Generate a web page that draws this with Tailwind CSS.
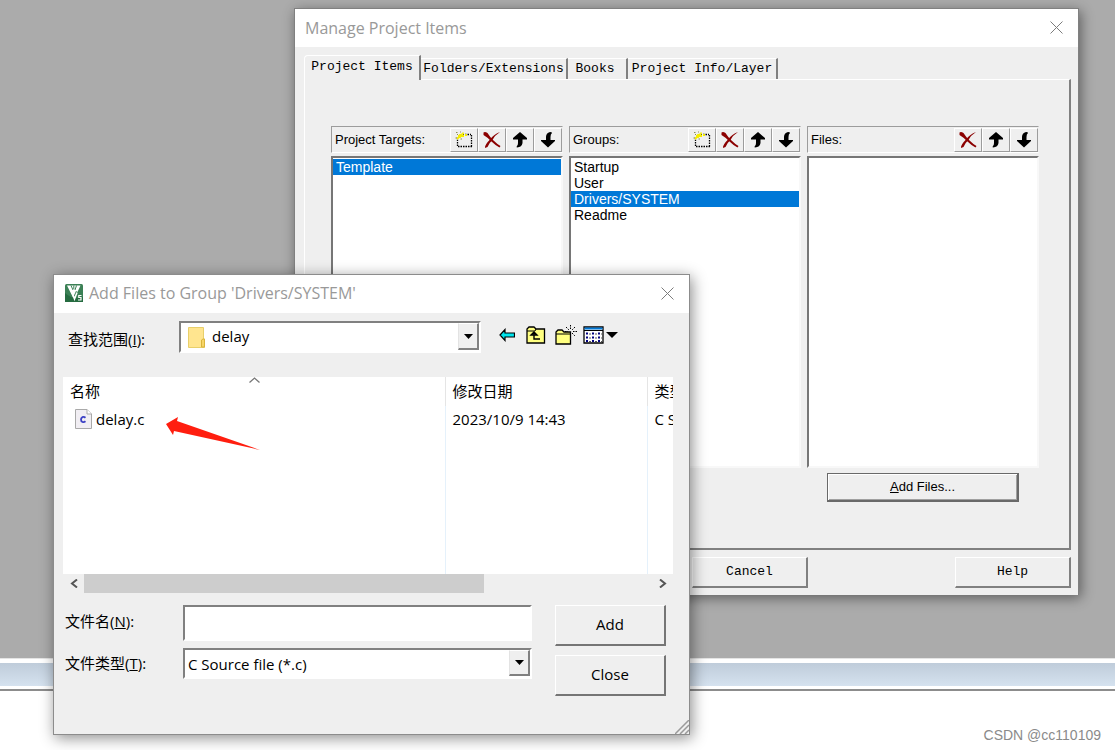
<!DOCTYPE html>
<html lang="zh-CN">
  <head>
    <meta charset="UTF-8" />
    <meta name="viewport" content="width=device-width, initial-scale=1.0" />
    <title>Manage Project Items</title>
    <script src="https://cdn.jsdelivr.net/npm/@tailwindcss/browser@4"></script>
  </head>

  <body class="font-['Open_Sans','Noto_Sans_CJK_SC',sans-serif] text-black">
    <!-- Shared icons -->
    <svg class="hidden">
      <symbol id="close" viewBox="0 0 13 13">
        <path d="M0.5 0.5L12.5 12.5M12.5 0.5L0.5 12.5" stroke="#7c7c7c" fill="none" />
      </symbol>
      <symbol id="new" viewBox="0 0 18 18">
        <path d="M5 3.500H16M2.500 6V16M3 15.500H17M16.500 4V16" stroke="#000" stroke-width="1.300" stroke-dasharray="1.500 1" fill="none" />
        <path d="M5 1v8M1 5h9M2 2l6 6M8 2L2 8" stroke="#efefef" stroke-width="2" />
        <path d="M5 3v4M3 5h6M7 3L2 8M8 1.500v2M10 4h2" stroke="#f5ec00" stroke-width="1.800" />
        <path d="M1 1.500h1.500M2 3.500h1M0.500 7h1.500M5 1h1M5.500 8h1.500" stroke="#8c8c50" />
      </symbol>
      <symbol id="delete" viewBox="0 0 18 18">
        <path d="M0.500 1.500Q2 0.500 4.500 2Q7 6 10 9Q14 13 17.500 15L16.500 16.500Q12 14 8.500 10.500Q4 6 0.500 4Z" fill="#8b0000" />
        <path d="M17 1Q12 4 9.500 9Q6 12 4.500 16L2 17Q1.500 14 7 8.500Q11 3 17 1Z" fill="#8b0000" />
      </symbol>
      <symbol id="up" viewBox="0 0 16 16">
        <path d="M8 0L15 6V7.500H10.500V11Q10 15 5 15.500Q4 15 5 14Q6 13 6 11V7.500H1V6Z" fill="#000" />
      </symbol>
      <symbol id="down" viewBox="0 0 16 16">
        <path d="M8 15.500L15 9V8H10.500V5Q10.500 2 12 1Q12 0 10 0Q6 1 6 5V8H1V9Z" fill="#000" />
      </symbol>
    </svg>

    <div class="relative flex h-screen min-h-[750px] flex-col overflow-hidden">
      <!-- IDE background -->
      <div class="flex-1 bg-[#ababab]"></div>
      <div class="h-[5px] border-t border-[#e4e4e4] bg-white"></div>
      <div class="h-[23px] bg-linear-to-b from-[#bfccda] to-[#d5e2ef]"></div>
      <div class="h-[5px] border-b-2 border-[#8c8c8c] bg-white"></div>
      <div class="flex h-[59px] items-end justify-end bg-white px-[14px] pb-[5px]">
        <p class="font-['Liberation_Sans',sans-serif] text-[14px] leading-5 text-[#8a8a8a]">CSDN @cc110109</p>
      </div>

      <!-- Manage Project Items -->
      <section class="absolute top-2 left-[294px] w-[785px] border border-b-0 border-[#808080] bg-[#efefef] shadow-[2px_3px_12px_rgba(0,0,0,0.45)]">
        <header class="flex h-[38px] items-center justify-between bg-white pr-[15px] pb-px pl-[10px]">
          <h2 class="text-[16px] text-[#999999]">Manage Project Items</h2>
          <button aria-label="Close window"><svg class="size-[13px]"><use href="#close" /></svg></button>
        </header>

        <div class="pt-2 pr-[7px] pb-[7px] pl-[9px]">
          <nav class="flex h-6 items-end font-['Liberation_Mono',monospace] text-[13px] leading-5">
            <button class="z-10 -mb-px h-[25px] w-[117px] rounded-tl-sm border-t border-r-2 border-l border-t-white border-r-[#808080] border-l-white bg-[#efefef] pb-[3px] text-center">Project Items</button>
            <button class="h-[21px] w-[147px] border-t border-r-2 border-t-white border-r-[#808080] text-center">Folders/Extensions</button>
            <button class="h-[21px] w-[60px] border-t border-r-2 border-t-white border-r-[#808080] pr-1 text-center">Books</button>
            <button class="h-[21px] w-[150px] border-t border-r-2 border-t-white border-r-[#808080] text-center">Project Info/Layer</button>
          </nav>

          <div class="border-t border-r-2 border-b-2 border-l border-t-white border-r-[#808080] border-b-[#808080] border-l-white pt-[46px] pr-[30px] pb-[46px] pl-[26px] font-['Liberation_Sans',sans-serif] text-[14px] leading-4">
            <div class="grid grid-cols-3 gap-[6px]">
              <div>
                <div class="flex h-[27px] items-stretch justify-between border border-t-[#9c9c9c] border-r-transparent border-b-white border-l-[#9c9c9c] pt-px pl-[3px]">
                  <span class="self-center text-[13px]">Project Targets:</span>
                  <div class="flex">
                    <button aria-label="New target" class="flex w-7 items-center justify-center border border-t-white border-r-[#9c9c9c] border-b-[#9c9c9c] border-l-white"><svg class="size-[18px]"><use href="#new" /></svg></button>
                    <button aria-label="Delete target" class="flex w-7 items-center justify-center border border-t-white border-r-[#9c9c9c] border-b-[#9c9c9c] border-l-white"><svg class="size-[18px]"><use href="#delete" /></svg></button>
                    <button aria-label="Move target up" class="flex w-7 items-center justify-center border border-t-white border-r-[#9c9c9c] border-b-[#9c9c9c] border-l-white"><svg class="size-4"><use href="#up" /></svg></button>
                    <button aria-label="Move target down" class="flex w-7 items-center justify-center border border-t-white border-r-[#9c9c9c] border-b-[#9c9c9c] border-l-white"><svg class="size-4"><use href="#down" /></svg></button>
                  </div>
                </div>
                <ul class="mt-[3px] h-[312px] border-2 border-t-[#767676] border-r-[#f8f8f8] border-b-[#f8f8f8] border-l-[#767676] bg-white pt-px">
                  <li class="bg-[#0078d7] px-[3px] text-white">Template</li>
                </ul>
              </div>

              <div>
                <div class="flex h-[27px] items-stretch justify-between border border-t-[#9c9c9c] border-r-transparent border-b-white border-l-[#9c9c9c] pt-px pl-[3px]">
                  <span class="self-center text-[13px]">Groups:</span>
                  <div class="flex">
                    <button aria-label="New group" class="flex w-7 items-center justify-center border border-t-white border-r-[#9c9c9c] border-b-[#9c9c9c] border-l-white"><svg class="size-[18px]"><use href="#new" /></svg></button>
                    <button aria-label="Delete group" class="flex w-7 items-center justify-center border border-t-white border-r-[#9c9c9c] border-b-[#9c9c9c] border-l-white"><svg class="size-[18px]"><use href="#delete" /></svg></button>
                    <button aria-label="Move group up" class="flex w-7 items-center justify-center border border-t-white border-r-[#9c9c9c] border-b-[#9c9c9c] border-l-white"><svg class="size-4"><use href="#up" /></svg></button>
                    <button aria-label="Move group down" class="flex w-7 items-center justify-center border border-t-white border-r-[#9c9c9c] border-b-[#9c9c9c] border-l-white"><svg class="size-4"><use href="#down" /></svg></button>
                  </div>
                </div>
                <ul class="mt-[3px] h-[312px] border-2 border-t-[#767676] border-r-[#f8f8f8] border-b-[#f8f8f8] border-l-[#767676] bg-white pt-px">
                  <li class="px-[3px]">Startup</li>
                  <li class="px-[3px]">User</li>
                  <li class="bg-[#0078d7] px-[3px] text-white">Drivers/SYSTEM</li>
                  <li class="px-[3px]">Readme</li>
                </ul>
              </div>

              <div>
                <div class="flex h-[27px] items-stretch justify-between border border-t-[#9c9c9c] border-r-transparent border-b-white border-l-[#9c9c9c] pt-px pl-[3px]">
                  <span class="self-center text-[13px]">Files:</span>
                  <div class="flex">
                    <button aria-label="Delete file" class="flex w-7 items-center justify-center border border-t-white border-r-[#9c9c9c] border-b-[#9c9c9c] border-l-white"><svg class="size-[18px]"><use href="#delete" /></svg></button>
                    <button aria-label="Move file up" class="flex w-7 items-center justify-center border border-t-white border-r-[#9c9c9c] border-b-[#9c9c9c] border-l-white"><svg class="size-4"><use href="#up" /></svg></button>
                    <button aria-label="Move file down" class="flex w-7 items-center justify-center border border-t-white border-r-[#9c9c9c] border-b-[#9c9c9c] border-l-white"><svg class="size-4"><use href="#down" /></svg></button>
                  </div>
                </div>
                <ul class="mt-[3px] h-[312px] border-2 border-t-[#767676] border-r-[#f8f8f8] border-b-[#f8f8f8] border-l-[#767676] bg-white"></ul>
                <button class="mx-auto mt-[5px] block h-[29px] w-48 border border-r-2 border-b-2 border-[#696969] text-[13px] shadow-[inset_1px_1px_0_#fff,inset_-1px_-1px_0_#a0a0a0]"><u>A</u>dd Files...</button>
              </div>
            </div>
          </div>

          <div class="mt-[7px] flex justify-end gap-[147px] font-['Liberation_Mono',monospace] text-[13px]">
            <button class="h-[31px] w-[116px] border border-r-2 border-b-2 border-t-white border-r-[#808080] border-b-[#808080] border-l-white">Cancel</button>
            <button class="h-[31px] w-[116px] border border-r-2 border-b-2 border-t-white border-r-[#808080] border-b-[#808080] border-l-white">Help</button>
          </div>
        </div>
      </section>

      <!-- Add Files dialog -->
      <section class="absolute top-[274px] left-[53px] w-[637px] border border-[#8c8c8c] bg-[#efefef] text-[15px] leading-5 shadow-[2px_3px_14px_rgba(0,0,0,0.45)]">
        <header class="flex h-[38px] items-center bg-white pr-[15px] pb-[2px] pl-[11px]">
          <svg class="size-[18px]" viewBox="0 0 18 18">
            <rect width="18" height="18" rx="1.500" fill="#3b8055" />
            <path d="M0 9V18H18V13Q9 17 0 9Z" fill="#256b40" />
            <path d="M2 1.500H15.500L12.500 8L11 7L8 13.500Z" fill="#fff" />
            <path d="M6 1.500L8 6M11.500 1.500L10 6M8.800 1.500V5" stroke="#3b8055" />
            <path d="M7 8L9.500 15L12 8.500" stroke="#fff" stroke-width="1.600" fill="none" />
            <path d="M16.500 11.500H13.800V13.500H16V16H13" stroke="#fff" stroke-width="1.200" fill="none" />
          </svg>
          <h2 class="ml-[6px] flex-1 text-[16px] text-[#999999]">Add Files to Group 'Drivers/SYSTEM'</h2>
          <button aria-label="Close dialog"><svg class="size-[13px]"><use href="#close" /></svg></button>
        </header>

        <div class="px-[9px] pt-2">
          <div class="flex h-8 items-center pl-[5px]">
            <label for="lookin" class="w-[111px] pt-1">查找范围(<u>I</u>):</label>
            <div class="relative w-[302px]">
              <select id="lookin" class="block h-8 w-full appearance-none border-2 border-t-[#808080] border-r-white border-b-white border-l-[#808080] bg-white pb-[2px] pl-[31px]">
                <option>delay</option>
              </select>
              <svg class="pointer-events-none absolute top-[6px] left-[9px] h-[21px] w-[17px]" viewBox="0 0 17 21">
                <path d="M0.500 0.500H15.500V12H16.500V20.500H0.500Z" fill="#ffe58f" stroke="#e8cf6a" />
                <path d="M13.500 20V13L15 12H16.500V20Z" fill="#f7d566" stroke="#d9b43c" />
              </svg>
              <span class="pointer-events-none absolute top-[2px] right-[2px] flex h-[27px] w-[21px] items-center justify-center border border-r-2 border-b-2 border-t-white border-r-[#808080] border-b-[#808080] border-l-[#e3e3e3] bg-[#efefef]">
                <svg class="h-[5px] w-[9px]" viewBox="0 0 9 5"><path d="M0 0H9L4.500 5Z" /></svg>
              </span>
            </div>
            <div class="flex items-center pb-[5px] pl-[18px]">
              <button aria-label="Back">
                <svg class="h-[14px] w-4" viewBox="0 0 16 14"><path d="M1 7L6 1.500V5H15.500V9H6V12.500Z" fill="#00e5ee" stroke="#000" stroke-width="1.200" /></svg>
              </button>
              <button aria-label="Up one level" class="ml-[11px]">
                <svg class="h-[18px] w-5" viewBox="0 0 20 18">
                  <path d="M1 17V3L3 1H8L10 3H18.500V17Z" fill="#ffff80" stroke="#000" stroke-width="1.300" />
                  <path d="M1 5H9L10 3" stroke="#000" fill="none" />
                  <path d="M8 6V13H14M5 9L8 6L11 9Z" stroke="#000" stroke-width="1.400" fill="none" />
                </svg>
              </button>
              <button aria-label="New folder" class="ml-[9px]">
                <svg class="h-5 w-[22px]" viewBox="0 0 22 20">
                  <path d="M1 19V7L3 5H7L9 7H15.500V19Z" fill="#ffff80" stroke="#000" stroke-width="1.300" />
                  <path d="M1 9H15" stroke="#000" />
                  <path d="M15.500 0V4M15.500 9V13M10 6.500H13M18 6.500H22M11 2L14 5M17 8L20 11M20 2L17 5" stroke="#000" stroke-dasharray="1.500 1" />
                </svg>
              </button>
              <button aria-label="View menu" class="ml-[6px] flex items-center gap-[2px]">
                <svg class="h-[18px] w-[21px]" viewBox="0 0 21 18">
                  <path d="M1 1H20V17H1Z" fill="#fff" stroke="#000" stroke-width="1.300" />
                  <path d="M1.500 2.500H19.500" stroke="#0078d7" stroke-width="2" />
                  <path d="M1 4.500H20" stroke="#000" />
                  <path d="M3 7.500H5M9 7.500H11M15 7.500H17M3 11.500H5M9 11.500H11M15 11.500H17M3 15H5M9 15H11M15 15H17" stroke="#000080" stroke-width="2" />
                  <path d="M6 8H8M12 8H14M18 8H19M6 12H8M12 12H14M18 12H19M6 15.500H8M12 15.500H14M18 15.500H19" stroke="#555" />
                </svg>
                <svg class="h-[6px] w-3" viewBox="0 0 12 6"><path d="M0 0H12L6 6Z" /></svg>
              </button>
            </div>
          </div>

          <!-- File list -->
          <div class="relative mt-6 h-[197px] w-[610px] overflow-hidden bg-white">
            <svg class="absolute top-0 left-[186px] h-[6px] w-[11px]" viewBox="0 0 11 6"><path d="M0.500 5.500L5.500 1L10.500 5.500" stroke="#777" stroke-width="1.300" fill="none" /></svg>
            <table class="h-full w-[780px] table-fixed text-left">
              <thead>
                <tr class="h-[29px]">
                  <th class="w-[382px] border-r border-[#e5e5e5] pb-[2px] pl-[7px] font-normal">名称</th>
                  <th class="w-[202px] border-r border-[#e5e5e5] pb-[2px] pl-[7px] font-normal">修改日期</th>
                  <th class="pb-[2px] pl-[7px] font-normal">类型</th>
                </tr>
              </thead>
              <tbody>
                <tr class="align-top">
                  <td class="border-r border-[#e5f1fb] pt-[3px] pl-3">
                    <div class="flex items-center gap-1">
                      <svg class="h-5 w-[17px]" viewBox="0 0 17 20">
                        <path d="M0.500 0.500H12L16.500 5V19.500H0.500Z" fill="#f1eef3" stroke="#a9a9a9" />
                        <path d="M12 0.500V5H16.500" fill="#fff" stroke="#a9a9a9" />
                        <path d="M10.500 8.800Q9 7.500 7.300 8.200Q6 9 6 10.500Q6 12.500 7.500 13Q9 13.500 10.500 12.300" stroke="#3b3fc4" stroke-width="1.800" fill="none" />
                      </svg>
                      delay.c
                    </div>
                  </td>
                  <td class="border-r border-[#e5f1fb] pt-[3px] pl-[7px]">2023/10/9 14:43</td>
                  <td class="pt-[3px] pl-[7px]">C Source File</td>
                </tr>
              </tbody>
            </table>
            <svg class="absolute top-10 left-[103px] h-[34px] w-[95px]" viewBox="0 0 95 34"><path d="M0 7L12 0L11 4L94 33L8 14L7 18Z" fill="#ff1e0f" /></svg>
          </div>
          <div class="flex h-[19px] w-[610px] items-center">
            <button aria-label="Scroll left" class="flex w-[21px] justify-center"><svg class="h-[9px] w-2" viewBox="0 0 8 9"><path d="M7 0.500L2 4.500L7 8.500" stroke="#555" stroke-width="2" fill="none" /></svg></button>
            <div class="h-full flex-1"><div class="h-full w-[400px] bg-[#cdcdcd]"></div></div>
            <button aria-label="Scroll right" class="flex w-[21px] justify-center"><svg class="h-[9px] w-2" viewBox="0 0 8 9"><path d="M1 0.500L6 4.500L1 8.500" stroke="#555" stroke-width="2" fill="none" /></svg></button>
          </div>

          <!-- Name, type and actions -->
          <div class="mt-3 flex gap-[23px] pl-[2px]">
            <div class="flex w-[467px] flex-col gap-[7px]">
              <div class="flex items-center">
                <label for="filename" class="w-[118px] pb-1">文件名(<u>N</u>):</label>
                <input id="filename" type="text" class="h-9 flex-1 border-2 border-t-[#808080] border-r-white border-b-white border-l-[#808080] bg-white px-1" />
              </div>
              <div class="flex items-center">
                <label for="filetype" class="w-[118px] pb-[2px]">文件类型(<u>T</u>):</label>
                <div class="relative flex-1">
                  <select id="filetype" class="block h-[31px] w-full appearance-none border-2 border-t-[#808080] border-r-white border-b-white border-l-[#808080] bg-white pl-[3px]">
                    <option>C Source file (*.c)</option>
                  </select>
                  <span class="pointer-events-none absolute top-[2px] right-[2px] flex h-[26px] w-[21px] items-center justify-center border border-r-2 border-b-2 border-t-white border-r-[#808080] border-b-[#808080] border-l-[#e3e3e3] bg-[#efefef]">
                    <svg class="h-[5px] w-[9px]" viewBox="0 0 9 5"><path d="M0 0H9L4.500 5Z" /></svg>
                  </span>
                </div>
              </div>
            </div>
            <div class="flex w-[111px] flex-col gap-[9px]">
              <button class="h-[41px] border border-r-2 border-b-2 border-t-white border-r-[#757575] border-b-[#757575] border-l-white pb-[2px]">Add</button>
              <button class="h-[41px] border border-r-2 border-b-2 border-t-white border-r-[#757575] border-b-[#757575] border-l-white pb-[2px]">Close</button>
            </div>
          </div>
        </div>
        <div class="mt-6 flex justify-end">
          <svg class="size-[14px]" viewBox="0 0 14 14"><path d="M0 14L14 0M5 14L14 5M10 14L14 10" stroke="#9a9a9a" stroke-width="1.500" /></svg>
        </div>
      </section>
    </div>
  </body>
</html>
